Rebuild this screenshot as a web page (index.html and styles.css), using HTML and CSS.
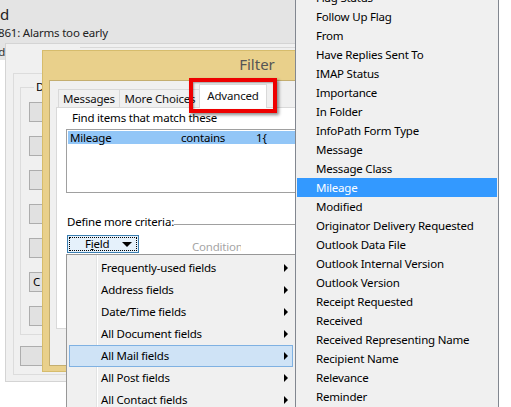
FILE: index.html
```html
<!DOCTYPE html>
<html lang="en">
<head>
    <meta charset="UTF-8">
    <title>Filter - Advanced</title>
    <link rel="stylesheet" href="styles.css">
</head>
<body>
    <!-- window behind the dialog -->
    <div class="back">
        <div class="back-head">
            <div class="back-title">d</div>
            <div class="back-sub">861: Alarms too early</div>
        </div>
        <div class="back-body">
            <div class="back-edge"><span>d</span></div>
            <div class="back-panel">
                <div class="back-line"></div>
                <div class="back-inner">
                    <fieldset class="group">
                        <legend>De</legend>
                        <span class="sq"></span>
                        <span class="sq"></span>
                        <span class="sq"></span>
                        <span class="sq"></span>
                        <span class="sq"></span>
                        <span class="sq">C</span>
                        <span class="sq"></span>
                    </fieldset>
                    <span class="sq sq-last"></span>
                </div>
            </div>
        </div>
    </div>

    <!-- Filter dialog -->
    <div class="filter">
        <div class="filter-title">Filter</div>
        <div class="client">
            <div class="tabs">
                <div class="tab tab-msg">Messages</div>
                <div class="tab tab-more">More Choices</div>
                <div class="tab active">Advanced</div>
            </div>
            <div class="page">
                <div class="find">Find items that match these</div>
                <div class="listbox">
                    <div class="crit">
                        <span class="c-field">Mileage</span>
                        <span class="c-cond">contains</span>
                        <span>1{</span>
                    </div>
                </div>
                <div class="define">
                    <span>Define more criteria:</span>
                    <span class="rule"></span>
                </div>
                <div class="field-row">
                    <div class="field-btn">
                        <span>F<u>i</u>eld</span>
                        <span class="down"></span>
                    </div>
                    <span class="cond-label">Condition</span>
                </div>
            </div>
        </div>
    </div>

    <div class="mark"></div>

    <!-- Field menu -->
    <div class="menu">
        <div class="item">Frequently-used fields<span class="arrow"></span></div>
        <div class="item">Address fields<span class="arrow"></span></div>
        <div class="item">Date/Time fields<span class="arrow"></span></div>
        <div class="item">All Document fields<span class="arrow"></span></div>
        <div class="item hot">All Mail fields<span class="arrow"></span></div>
        <div class="item">All Post fields<span class="arrow"></span></div>
        <div class="item">All Contact fields<span class="arrow"></span></div>
    </div>

    <!-- All Mail fields submenu -->
    <div class="fields">
        <div class="row">Flag Status</div>
        <div class="row">Follow Up Flag</div>
        <div class="row">From</div>
        <div class="row">Have Replies Sent To</div>
        <div class="row">IMAP Status</div>
        <div class="row">Importance</div>
        <div class="row">In Folder</div>
        <div class="row">InfoPath Form Type</div>
        <div class="row">Message</div>
        <div class="row">Message Class</div>
        <div class="row sel">Mileage</div>
        <div class="row">Modified</div>
        <div class="row">Originator Delivery Requested</div>
        <div class="row">Outlook Data File</div>
        <div class="row">Outlook Internal Version</div>
        <div class="row">Outlook Version</div>
        <div class="row">Receipt Requested</div>
        <div class="row">Received</div>
        <div class="row">Received Representing Name</div>
        <div class="row">Recipient Name</div>
        <div class="row">Relevance</div>
        <div class="row">Reminder</div>
    </div>
</body>
</html>
```

FILE: styles.css
```css
* {
    box-sizing: border-box;
}
body {
    margin: 0;
    width: 511px;
    height: 407px;
    overflow: hidden;
    position: relative;
    background: #fff;
    font-family: "Noto Sans", "Liberation Sans", sans-serif;
    font-size: 11.5px;
    letter-spacing: -0.2px;
    color: #000;
}

/* background window */
.back {
    position: absolute;
    left: 0;
    top: 0;
    width: 300px;
}
.back-head {
    height: 43px;
    background: #e4e4e4;
    padding-top: 4px;
    overflow: hidden;
    white-space: nowrap;
}
.back-title {
    font-size: 15px;
    line-height: 21px;
    color: #222;
}
.back-sub {
    line-height: 16px;
    text-indent: -2px;
    color: #222;
}
.back-body {
    display: flex;
    align-items: flex-start;
}
.back-edge {
    width: 5px;
    height: 17px;
    background: #e4e4e4;
    overflow: hidden;
    display: flex;
    justify-content: flex-end;
    line-height: 17px;
    color: #333;
}
.back-panel {
    width: 295px;
    height: 339px;
    background: #f0f0f0;
    border: 1px solid #d4d4d4;
    padding: 3px 0 0 7px;
}
.back-line {
    margin-left: 67px;
    border-top: 1px solid #d9d9d9;
}
.back-inner {
    margin-top: 25px;
    height: 302px;
    border: 1px solid #dcdcdc;
    padding: 5px 0 0 6px;
}
.group {
    margin: 0;
    width: 270px;
    border: 1px solid #dcdcdc;
    padding: 7px 0 8px 8px;
}
.group legend {
    margin-left: 5px;
    padding: 0 2px;
    line-height: 16px;
}
.sq {
    display: block;
    width: 30px;
    height: 20px;
    margin-bottom: 14px;
    border: 1px solid #adadad;
    background: #e1e1e1;
    padding-left: 3px;
    line-height: 18px;
}
.group .sq:last-of-type {
    margin-bottom: 0;
}
.sq-last {
    margin-top: 11px;
}

/* Filter dialog */
.filter {
    position: absolute;
    left: 42px;
    top: 50px;
    width: 430px;
    height: 322px;
    background: #e9d08b;
    border: 1px solid #d6bc6c;
    display: flex;
    flex-direction: column;
}
.filter-title {
    height: 29px;
    line-height: 27px;
    text-align: center;
    font-size: 15px;
    letter-spacing: 0;
    color: #555;
}
.client {
    flex: 1;
    margin: 0 6px 5px;
    background: #f0f0f0;
    border: 1px solid #c4ae70;
    padding: 3px 0 0 6px;
}
.tabs {
    display: flex;
    align-items: flex-end;
    height: 23px;
    padding-left: 2px;
}
.tab {
    height: 18px;
    line-height: 17px;
    text-align: center;
    border: 1px solid #d9d9d9;
    border-bottom: none;
    background: #f0f0f0;
    color: #111;
    white-space: nowrap;
    overflow: hidden;
}
.tab-msg {
    width: 62px;
}
.tab-more {
    width: 82px;
    margin-left: -1px;
}
.tab.active {
    width: 68px;
    height: 24px;
    margin: 0 0 -1px -2px;
    line-height: 22px;
    background: #fff;
    position: relative;
    z-index: 1;
}
.page {
    width: 420px;
    height: 222px;
    background: #fff;
    border: 1px solid #d9d9d9;
    padding: 3px 0 0 9px;
}
.find {
    line-height: 14px;
    padding-left: 6px;
    margin-bottom: 4px;
}
.listbox {
    width: 300px;
    height: 64px;
    border: 1px solid #a0a0a0;
    padding: 1px;
}
.crit {
    display: flex;
    height: 13px;
    line-height: 13px;
    background: #92c6f7;
    padding-left: 2px;
    white-space: nowrap;
}
.c-field {
    width: 111px;
}
.c-cond {
    width: 75px;
}
.define {
    display: flex;
    align-items: center;
    margin-top: 22px;
    line-height: 14px;
    padding-left: 1px;
}
.rule {
    flex: 1;
    height: 1px;
    margin-top: 4px;
    background: #a0a0a0;
}
.field-row {
    display: flex;
    align-items: flex-start;
    margin-top: 6px;
    padding-left: 1px;
}
.field-btn {
    width: 72px;
    height: 18px;
    border: 1px solid #3c7fb1;
    background: #e5f1fb;
    outline: 1px dotted #000;
    outline-offset: -3px;
    display: flex;
    align-items: center;
    justify-content: space-between;
    padding: 0 6px 0 17px;
    line-height: 16px;
}
.down {
    width: 0;
    height: 0;
    border-left: 5px solid transparent;
    border-right: 5px solid transparent;
    border-top: 5px solid #000;
}
.cond-label {
    width: 49px;
    overflow: hidden;
    white-space: nowrap;
    margin: 6px 0 0 53px;
    line-height: 12px;
    color: #a6a6a6;
}

/* red annotation box */
.mark {
    position: absolute;
    left: 189px;
    top: 78px;
    width: 88px;
    height: 35px;
    border: 4px solid #ee0000;
    box-shadow: 2px 2px 3px rgba(0,0,0,0.45), inset 1px 1px 2px rgba(0,0,0,0.35);
}

/* Field menu */
.menu {
    position: absolute;
    left: 66px;
    top: 254px;
    width: 230px;
    height: 170px;
    padding: 2px;
    border: 1px solid #979797;
    background: #f0f0f0 linear-gradient(to right, transparent 29px, #e2e3e3 29px, #e2e3e3 30px, #fff 30px, #fff 31px, transparent 31px);
}
.item {
    height: 22px;
    line-height: 20px;
    border: 1px solid transparent;
    padding: 0 4px 0 31px;
    display: flex;
    align-items: center;
    justify-content: space-between;
    white-space: nowrap;
}
.item.hot {
    background: #cfe3f6;
    border-color: #7fb1e2;
}
.arrow {
    width: 0;
    height: 0;
    border-top: 4px solid transparent;
    border-bottom: 4px solid transparent;
    border-left: 4px solid #000;
}

/* field list */
.fields {
    position: absolute;
    left: 295px;
    top: -13px;
    width: 204px;
    height: 440px;
    padding: 0 1px;
    background: #f0f0f0;
    border: 1px solid #828790;
}
.row {
    height: 19px;
    line-height: 19px;
    padding-left: 19px;
    white-space: nowrap;
}
.row.sel {
    background: #3399ff;
    color: #fff;
}
```
